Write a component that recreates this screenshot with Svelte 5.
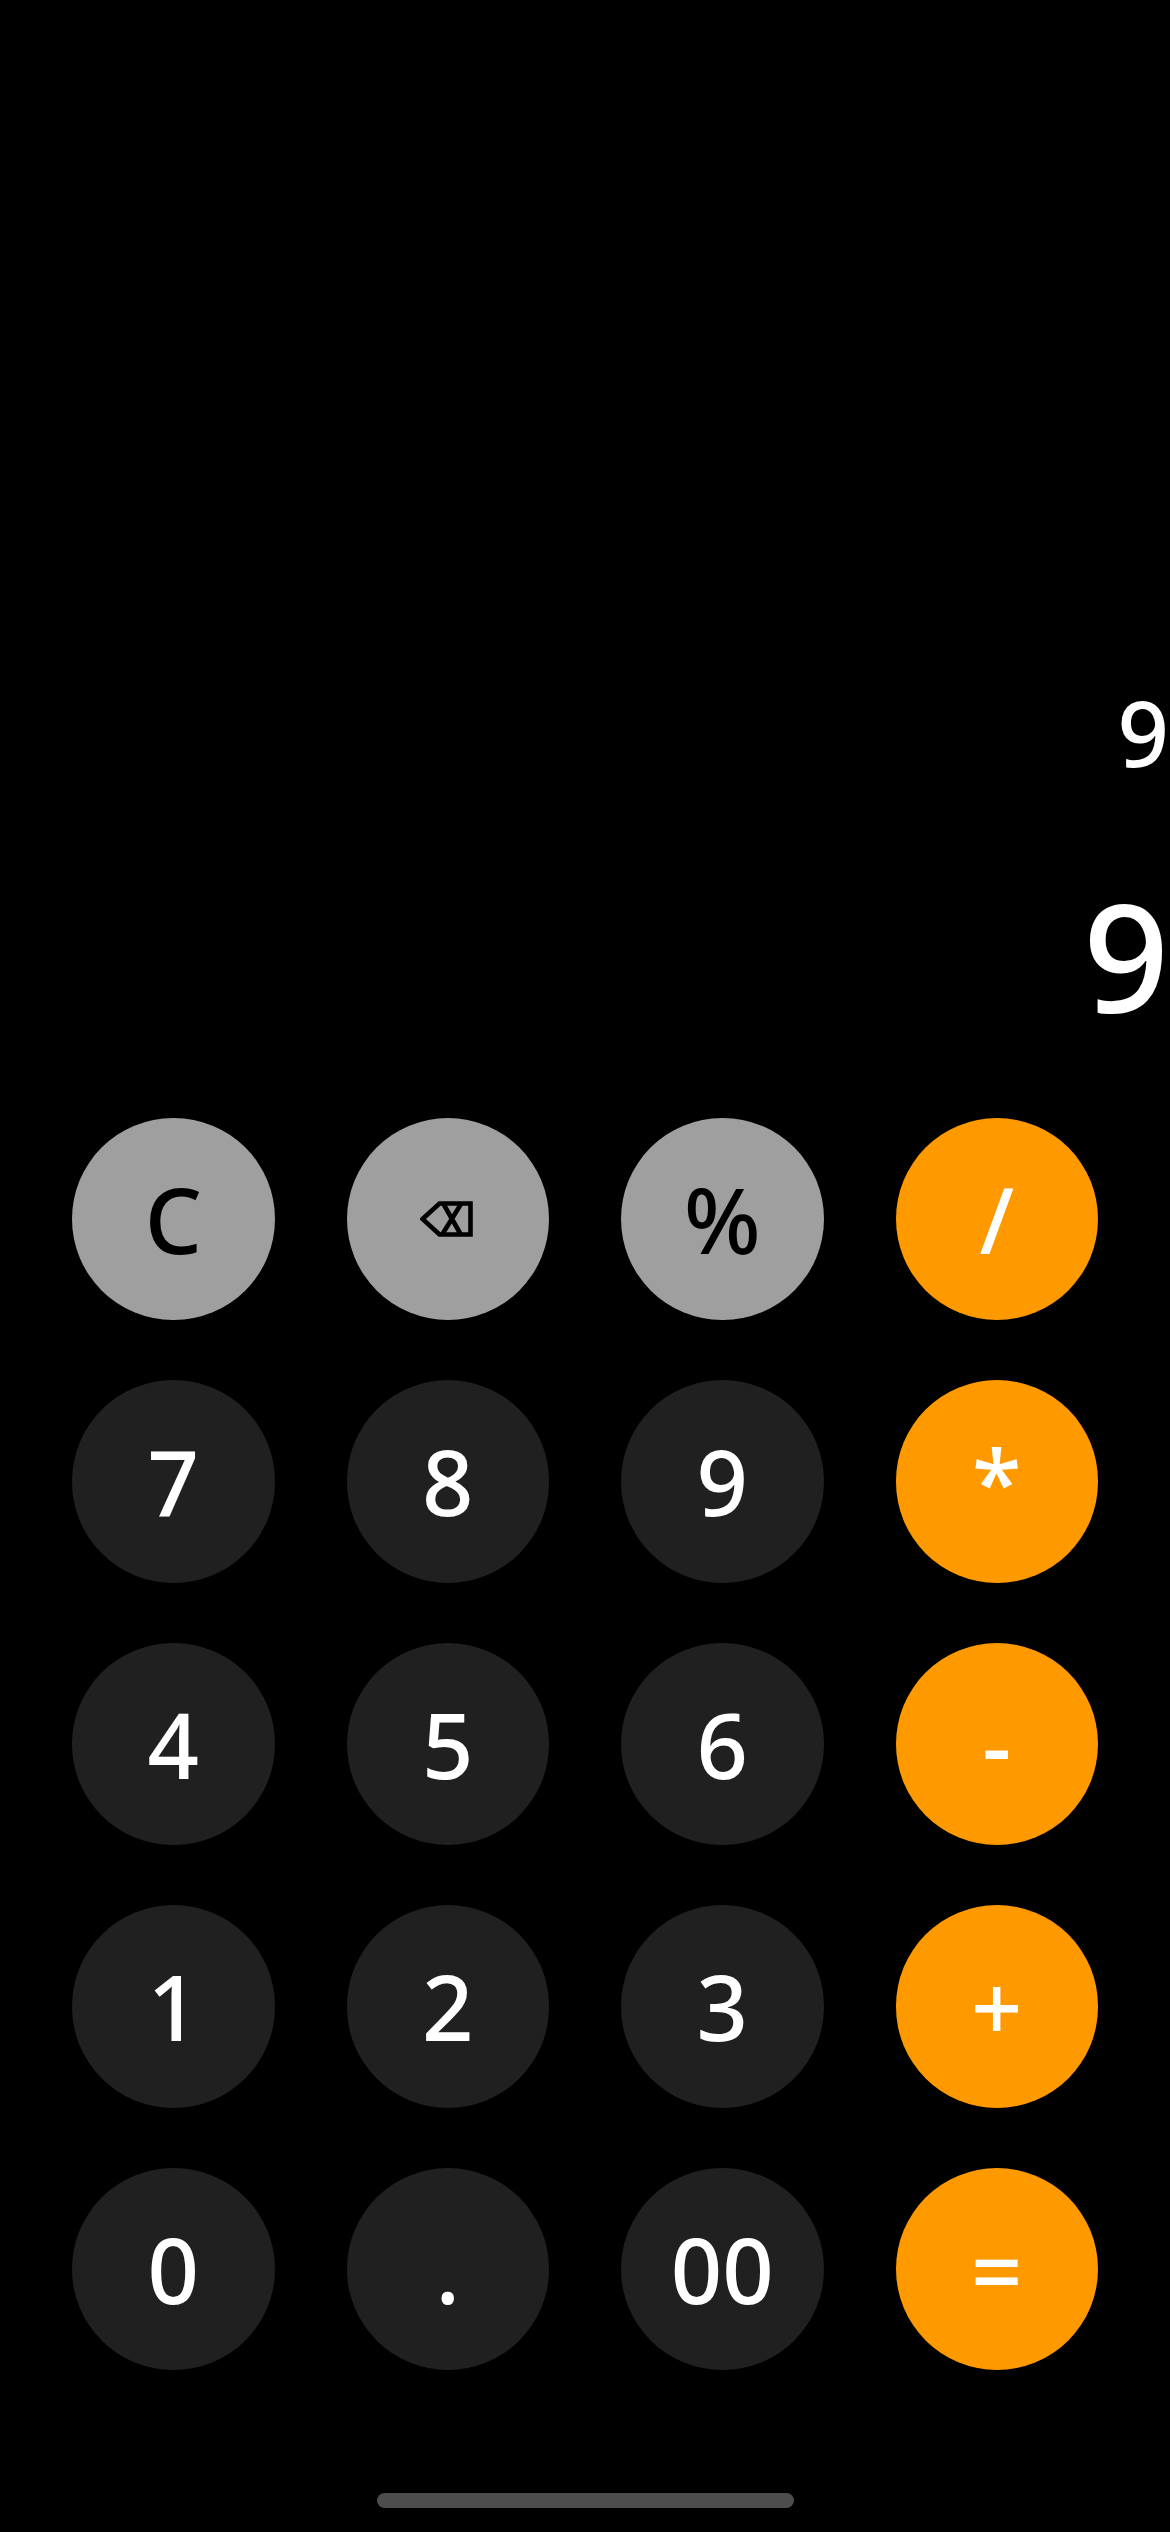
<script>
  const keys = [
    ["C", "fn"], ["back", "fn"], ["%", "fn"], ["/", "op"],
    ["7", ""], ["8", ""], ["9", ""], ["*", "op"],
    ["4", ""], ["5", ""], ["6", ""], ["-", "op"],
    ["1", ""], ["2", ""], ["3", ""], ["+", "op"],
    ["0", ""], [".", ""], ["00", ""], ["=", "op"]
  ];
</script>

<main class="screen">
  <section class="display">
    <div class="expr">9</div>
    <div class="result">9</div>
  </section>

  <section class="pad">
    {#each keys as [label, kind]}
      <button class={["key", kind].join(" ")}>
        {#if label === "back"}
          <svg class="back-icon" viewBox="0 0 54 36" aria-label="backspace">
            <path d="M2.5 18 L19.5 2.5 H50.5 V33.5 H19.5 Z" />
            <path d="M23.5 3 L40.5 33 M41 3 L22.5 33" />
          </svg>
        {:else}
          {label}
        {/if}
      </button>
    {/each}
  </section>

  <div class="home-bar"></div>
</main>

<style>
  :global(body) {
    background: #000;
  }

  .screen {
    display: flex;
    flex-direction: column;
    width: 1170px;
    height: 2532px;
    background: #000;
    color: #fff;
    font-family: "Noto Sans", sans-serif;
    font-weight: 500;
    overflow: hidden;
  }

  .display {
    display: flex;
    flex-direction: column;
    justify-content: flex-end;
    align-items: flex-end;
    gap: 60px;
    height: 1117.5px;
    padding: 0 1px 61px 0;
    box-sizing: border-box;
  }

  .expr {
    font-size: 90px;
  }

  .result {
    font-size: 150px;
  }

  .pad {
    display: grid;
    grid-template-columns: repeat(4, 1fr);
    grid-auto-rows: 202.5px;
    column-gap: 72px;
    row-gap: 60px;
    padding: 0 72px;
  }

  .key {
    display: flex;
    align-items: center;
    justify-content: center;
    padding: 0;
    border: none;
    border-radius: 50%;
    background: #202020;
    color: #fff;
    font-family: inherit;
    font-size: 90px;
    font-weight: inherit;
  }

  .fn {
    background: #9f9f9f;
    color: #000;
  }

  .op {
    background: #ff9900;
    color: #fff;
  }

  .back-icon {
    width: 54px;
    height: 36px;
    margin-left: -2px;
    fill: none;
    stroke: #000;
    stroke-width: 4.6;
  }

  .home-bar {
    width: 417px;
    height: 15px;
    margin: 123px 0 0 377px;
    border-radius: 8px;
    background: #4d4d4d;
  }
</style>
